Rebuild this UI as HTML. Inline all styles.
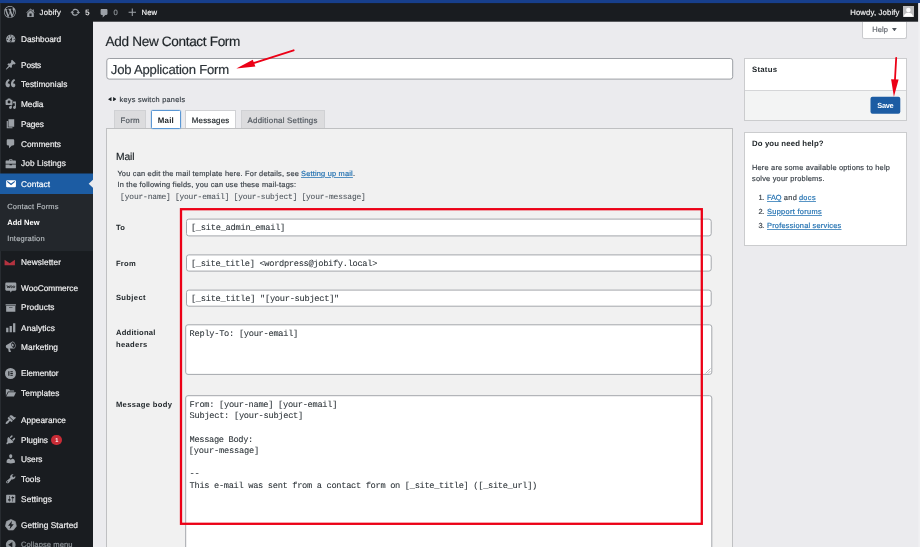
<!DOCTYPE html>
<html><head><meta charset="utf-8"><title>Add New Contact Form</title>
<style>
*{box-sizing:border-box;margin:0;padding:0}
html,body{width:920px;height:547px;overflow:hidden;background:#ebebee;font-family:"Liberation Sans",sans-serif;color:#3c434a}
.a{position:absolute}
.t{position:absolute;white-space:pre;text-rendering:geometricPrecision;line-height:12px;height:12px;-webkit-text-stroke:0.18px currentColor}
.inp{position:absolute;background:#fff;border:1px solid #a3a6ab;border-radius:2.5px}
.tab{position:absolute;top:110px;height:18px;border:1px solid #d0d1d4;border-bottom:none}
.box{position:absolute;background:#fff;border:1px solid #cbccce}
</style></head><body>
<div id="root" style="position:absolute;left:0;top:0;width:920px;height:547px;overflow:hidden">
<svg class="a" style="left:0;top:0" width="920" height="547" viewBox="0 0 920 547">
<rect x="0" y="0" width="918.3" height="21.7" fill="#191c20"/>
<rect x="0" y="0" width="920" height="3.1" fill="#173f8c"/>
<rect x="918.3" y="3.1" width="1.7" height="544" fill="#f0f0f2"/>
<rect x="0" y="10" width="93" height="540" fill="#191c20"/>
<rect x="0" y="3.1" width="0.9" height="545" fill="#2b2f34"/>
<rect x="0" y="173.5" width="93" height="20.5" fill="#1c5ca3"/>
<rect x="0" y="194" width="93" height="57.1" fill="#23272c"/>
<path d="M93.200 179.600L88.700 183.800L93.200 188z" fill="#ebebee"/>
</svg>
<div class="a" style="left:903.3px;top:6px;width:10.8px;height:10.8px;background:#bdbdbf;overflow:hidden"><svg class="a" style="left:0;top:0" width="10.8" height="10.8" viewBox="0 0 20 20"><circle cx="10" cy="7.5" r="4.2" fill="#fff"/><path d="M1.5 20c.5-5 3.5-7.5 8.5-7.5s8 2.500 8.500 7.500z" fill="#fff"/></svg></div>

<!-- Help tab -->
<div class="a" style="left:862px;top:22px;width:45px;height:17px;background:#fff;border:1px solid #c9cacd;border-top:none;border-radius:0 0 2.5px 2.5px"></div>
<svg class="a" style="left:892.4px;top:27.8px" width="4.8" height="3.4" viewBox="0 0 10 7"><path d="M0 0h10L5 7z" fill="#50575e"/></svg>

<!-- title input -->
<svg class="a" style="left:107.6px;top:96.9px" width="8.6" height="4.4" viewBox="0 0 8.600 4.400"><path d="M0 2.200L3.500 0v4.400zM8.600 2.200L5.100 0v4.400z" fill="#1d2327"/></svg>

<!-- tabs + panel -->
<div class="tab" style="left:114.3px;width:31.6px;background:#dcdcde"></div>
<div class="tab" style="left:185px;width:51px;background:#fff"></div>
<div class="tab" style="left:241.1px;width:83.5px;background:#dcdcde"></div>
<div class="a" style="left:106px;top:128px;width:627px;height:419px;background:#f1f1f1;border:1px solid #bfc0c2;border-bottom:none"></div>
<div class="tab" style="left:151.1px;width:29.6px;background:#fff;border:1px solid #5a97d4;border-radius:1.5px;box-shadow:0 0 0 0.5px rgba(90,151,212,.25);height:19px"></div>

<!-- fields -->
<svg class="a" style="left:0;top:0" width="920" height="547" viewBox="0 0 920 547">
<g fill="#fff" stroke="#a4a7ac" stroke-width="1">
<rect x="106.8" y="58.5" width="625.9" height="20.6" rx="2.4" stroke="#9c9fa4"/>
<rect x="186.5" y="219.1" width="524.7" height="16.8" rx="2.3"/>
<rect x="186.5" y="254.9" width="524.7" height="16.2" rx="2.3"/>
<rect x="186.5" y="290.1" width="524.7" height="16.100" rx="2.3"/>
<rect x="185.7" y="324.800" width="526.1" height="49.600" rx="2.3"/>
<rect x="185.7" y="395.700" width="526.1" height="170" rx="2.3"/>
</g></svg>
<svg class="a" style="left:705px;top:367.7px" width="6" height="6" viewBox="0 0 6 6"><path d="M5.5 0.500L0.500 5.500M5.500 3L3 5.500" stroke="#8c8f94" stroke-width="0.6" fill="none"/></svg>

<!-- right column -->
<div class="box" style="left:744px;top:58px;width:163px;height:63px"></div>
<div class="a" style="left:745px;top:90px;width:161px;height:30px;background:#f3f4f4;border-top:1px solid #d5d6d8"></div>
<svg class="a" style="left:0;top:0" width="920" height="547"><rect x="870.5" y="96.7" width="29.8" height="17.1" rx="2" fill="#1c5ca3"/></svg>
<div class="box" style="left:744px;top:132px;width:163px;height:114px"></div>

<svg style="position:absolute;left:3.90px;top:6.10px" width="11.80" height="11.80" viewBox="0 0 20 20"><path fill="#9ca1a7" fill-rule="evenodd" d="M20 10c0-5.51-4.49-10-10-10C4.48 0 0 4.49 0 10c0 5.52 4.48 10 10 10 5.51 0 10-4.48 10-10zM7.78 15.37L4.37 6.22c.55-.02 1.17-.08 1.17-.08.5-.06.44-1.13-.06-1.11 0 0-1.45.11-2.37.11-.18 0-.37 0-.58-.01C4.12 2.69 6.87 1.11 10 1.11c2.33 0 4.45.87 6.05 2.34-.68-.11-1.65.39-1.65 1.58 0 .74.45 1.36.9 2.1.35.61.55 1.36.55 2.46 0 1.49-1.4 5-1.4 5l-3.03-8.37c.54-.02.82-.17.82-.17.5-.05.44-1.25-.06-1.22 0 0-1.44.12-2.38.12-.87 0-2.33-.12-2.33-.12-.5-.03-.56 1.2-.06 1.22l.92.08 1.26 3.41zM17.41 10c.24-.64.74-1.87.43-4.25.7 1.29 1.05 2.71 1.05 4.25 0 3.29-1.73 6.24-4.4 7.78.97-2.59 1.94-5.2 2.92-7.78zM6.1 18.09C3.12 16.65 1.11 13.53 1.11 10c0-1.3.23-2.48.72-3.59C3.25 10.3 4.67 14.2 6.1 18.09zm4.03-6.63l2.58 6.98c-.86.29-1.76.45-2.71.45-.79 0-1.57-.11-2.29-.33.81-2.38 1.62-4.74 2.42-7.1z"/></svg>
<svg style="position:absolute;left:24.70px;top:6.80px" width="11.00" height="11.00" viewBox="0 0 20 20"><path fill="#9ca1a7" fill-rule="evenodd" d="M16 8.5l1.53 1.53-1.06 1.06L10 4.62l-6.47 6.47-1.06-1.06L10 2.5l4 4v-2h2v4zm-6-2.46l6 5.99V18H4v-5.97zM12 17v-5H8v5h4z"/></svg>
<svg style="position:absolute;left:70.10px;top:7.10px" width="10.60" height="10.60" viewBox="0 0 20 20"><path fill="#9ca1a7" fill-rule="evenodd" d="M10.2 3.28c3.53 0 6.43 2.61 6.92 6h2.08l-3.5 4-3.5-4h2.32c-.45-1.97-2.21-3.45-4.32-3.45-1.45 0-2.73.71-3.54 1.78L4.95 5.66C6.23 4.2 8.11 3.28 10.2 3.28zm-.4 13.44c-3.52 0-6.43-2.61-6.92-6H.8l3.5-4c1.17 1.33 2.33 2.67 3.5 4H5.48c.45 1.97 2.21 3.45 4.32 3.45 1.45 0 2.73-.71 3.54-1.78l1.71 1.95c-1.28 1.46-3.15 2.38-5.25 2.38z"/></svg>
<svg style="position:absolute;left:98.50px;top:7.50px" width="10.60" height="10.60" viewBox="0 0 20 20"><path fill="#9ca1a7" fill-rule="evenodd" d="M5 2h9c1.1 0 2 .9 2 2v7c0 1.1-.9 2-2 2h-2l-5 5v-5H5c-1.1 0-2-.9-2-2V4c0-1.1.9-2 2-2z"/></svg>
<svg style="position:absolute;left:127.20px;top:7.10px" width="10.60" height="10.60" viewBox="0 0 20 20"><path fill="#9ca1a7" fill-rule="evenodd" d="M17 9v2h-6v6H9v-6H3V9h6V3h2v6h6z"/></svg>
<svg style="position:absolute;left:4.75px;top:32.65px" width="11.50" height="11.50" viewBox="0 0 20 20"><path fill="#9ca1a7" fill-rule="evenodd" d="M3.76 16h12.48c1.1-1.37 1.76-3.11 1.76-5 0-4.42-3.58-8-8-8s-8 3.58-8 8c0 1.89.66 3.63 1.76 5zM10 4c.55 0 1 .45 1 1s-.45 1-1 1-1-.45-1-1 .45-1 1-1zM6 6c.55 0 1 .45 1 1s-.45 1-1 1-1-.45-1-1 .45-1 1-1zm8 0c.55 0 1 .45 1 1s-.45 1-1 1-1-.45-1-1 .45-1 1-1zm-5.37 5.55L12 7v6c0 1.1-.9 2-2 2s-2-.9-2-2c0-.57.24-1.08.63-1.45zM4 10c.55 0 1 .45 1 1s-.45 1-1 1-1-.45-1-1 .45-1 1-1zm12 0c.55 0 1 .45 1 1s-.45 1-1 1-1-.45-1-1 .45-1 1-1zm-5 3c0-.55-.45-1-1-1s-1 .45-1 1 .45 1 1 1 1-.45 1-1z"/></svg>
<svg style="position:absolute;left:4.75px;top:58.65px" width="11.50" height="11.50" viewBox="0 0 20 20"><path fill="#9ca1a7" fill-rule="evenodd" d="M10.44 3.02l1.82-1.82 6.36 6.35-1.83 1.82c-1.05-.68-2.48-.57-3.41.36l-.75.75c-.92.93-1.04 2.35-.35 3.41l-1.83 1.82-2.41-2.41-2.8 2.79c-.42.42-3.38 2.71-3.8 2.29s1.86-3.39 2.28-3.81l2.79-2.79L4.1 9.36l1.83-1.82c1.05.69 2.48.57 3.4-.36l.75-.75c.93-.92 1.05-2.35.36-3.41z"/></svg>
<svg style="position:absolute;left:4.75px;top:77.85px" width="11.50" height="11.50" viewBox="0 0 20 20"><path fill="#9ca1a7" fill-rule="evenodd" d="M8.54 12.74c0-.87-.24-1.61-.72-2.22-.73-.92-2.14-1.03-2.96-.85-.34-1.93 1.3-4.39 3.42-5.45L6.65 1.94C3.45 3.46.31 6.96.85 11.37 1.19 14.16 2.8 16 5.08 16c1 0 1.83-.29 2.48-.88.66-.59.98-1.38.98-2.38zm9.43 0c0-.87-.24-1.61-.72-2.22-.73-.92-2.14-1.03-2.96-.85-.34-1.93 1.3-4.39 3.42-5.45l-1.63-2.28c-3.2 1.52-6.34 5.02-5.8 9.43.34 2.79 1.95 4.63 4.23 4.63 1 0 1.83-.29 2.48-.88.66-.59.98-1.38.98-2.38z"/></svg>
<svg style="position:absolute;left:4.75px;top:98.05px" width="11.50" height="11.50" viewBox="0 0 20 20"><path fill="#9ca1a7" fill-rule="evenodd" d="M13 11V4c0-.55-.45-1-1-1h-1.67L9 1H5L3.67 3H2c-.55 0-1 .45-1 1v7c0 .55.45 1 1 1h10c.55 0 1-.45 1-1zM7 4.5c1.38 0 2.5 1.12 2.5 2.5S8.38 9.5 7 9.5 4.5 8.38 4.5 7 5.62 4.5 7 4.5zM14 6h5v10.5c0 1.38-1.12 2.5-2.5 2.5S14 17.88 14 16.5s1.12-2.5 2.5-2.5c.17 0 .34.02.5.05V9h-3V6zm-4 8.05V13h2v3.5c0 1.38-1.12 2.5-2.5 2.5S7 17.88 7 16.5 8.12 14 9.5 14c.17 0 .34.02.5.05z"/></svg>
<svg style="position:absolute;left:4.75px;top:118.05px" width="11.50" height="11.50" viewBox="0 0 20 20"><path fill="#9ca1a7" fill-rule="evenodd" d="M6 15V2h10v13H6zm-1 1h8v2H3V5h2v11z"/></svg>
<svg style="position:absolute;left:4.75px;top:138.15px" width="11.50" height="11.50" viewBox="0 0 20 20"><path fill="#9ca1a7" fill-rule="evenodd" d="M5 2h9c1.1 0 2 .9 2 2v7c0 1.1-.9 2-2 2h-2l-5 5v-5H5c-1.1 0-2-.9-2-2V4c0-1.1.9-2 2-2z"/></svg>
<svg style="position:absolute;left:4.75px;top:157.75px" width="11.50" height="11.50" viewBox="0 0 20 20"><path fill="#9ca1a7" fill-rule="evenodd" d="M7 4.5V3.2C7 2.5 7.5 2 8.2 2h3.6c.7 0 1.2.5 1.2 1.2v1.3h5c.6 0 1 .4 1 1V10H1V5.5c0-.6.4-1 1-1h5zm1.5 0h3v-1h-3v1zM1 11.2h7v1.6h4v-1.6h7V17c0 .6-.4 1-1 1H2c-.6 0-1-.4-1-1v-5.8z"/></svg>
<svg style="position:absolute;left:4.75px;top:177.75px" width="11.50" height="11.50" viewBox="0 0 20 20"><path fill="#ffffff" fill-rule="evenodd" d="M3.87 4h13.25C18.37 4 19 4.59 19 5.79v8.42c0 1.19-.63 1.79-1.88 1.79H3.87c-1.25 0-1.88-.6-1.88-1.79V5.79c0-1.2.63-1.79 1.88-1.79zm6.62 8.6l6.74-5.53c.24-.2.43-.66.13-1.07-.29-.41-.82-.42-1.17-.17l-5.7 3.86L4.8 5.83c-.35-.25-.88-.24-1.17.17-.3.41-.11.87.13 1.07z"/></svg>
<svg style="position:absolute;left:4.75px;top:301.65px" width="11.50" height="11.50" viewBox="0 0 20 20"><path fill="#9ca1a7" fill-rule="evenodd" d="M19 4v2H1V4h18zM2 7h16v10H2V7zm11 3V9H7v1h6z"/></svg>
<svg style="position:absolute;left:4.75px;top:321.65px" width="11.50" height="11.50" viewBox="0 0 20 20"><path fill="#9ca1a7" fill-rule="evenodd" d="M18 18V2h-4v16h4zm-6 0V7H8v11h4zm-6 0v-8H2v8h4z"/></svg>
<svg style="position:absolute;left:4.75px;top:341.45px" width="11.50" height="11.50" viewBox="0 0 20 20"><path fill="#9ca1a7" fill-rule="evenodd" d="M18.15 5.94c.46 1.62.38 3.22-.02 4.48-.42 1.28-1.26 2.18-2.3 2.48-.16.06-.26.06-.4.06-.06.02-.12.02-.18.02-.06.02-.14.02-.22.02h-6.8l2.22 5.5c.02.14-.06.26-.14.34-.08.1-.24.16-.34.16H6.95c-.1 0-.26-.06-.34-.16-.08-.08-.16-.2-.14-.34l-1-5.5H4.25l-.02-.02c-.5.06-1.08-.18-1.54-.62s-.88-1.08-1.06-1.88c-.24-.8-.2-1.56-.02-2.2.18-.62.58-1.08 1.06-1.3l.02-.02 9-5.4c.1-.06.18-.1.24-.16.06-.04.14-.08.24-.12.16-.08.28-.12.5-.18 1.04-.3 2.24.1 3.22.98s1.84 2.24 2.26 3.86zm-2.58 5.98h-.02c.4-.1.74-.34 1.04-.7.58-.7.86-1.76.86-3.04 0-.64-.1-1.3-.28-1.98-.34-1.36-1.02-2.5-1.78-3.24s-1.68-1.1-2.46-.88c-.82.22-1.4.96-1.7 2-.32 1.04-.28 2.36.06 3.72.38 1.36 1 2.5 1.8 3.24.78.74 1.62 1.1 2.48.88zm-2.54-7.08c.22-.04.42-.02.62.04.38.16.76.48 1.02 1s.42 1.2.42 1.78c0 .3-.04.56-.12.8-.18.48-.44.84-.86.94-.34.1-.8-.06-1.14-.4s-.64-.86-.78-1.5c-.18-.62-.12-1.24.02-1.72s.48-.84.82-.94z"/></svg>
<svg style="position:absolute;left:4.75px;top:387.05px" width="11.50" height="11.50" viewBox="0 0 20 20"><path fill="#9ca1a7" fill-rule="evenodd" d="M1.5 4h5.5l1.8 2H15c.6 0 1 .4 1 1v1H5.2L1.5 15.2V4zM6 9.2h13.2l-3.6 7.3H2.2L6 9.2z"/></svg>
<svg style="position:absolute;left:4.75px;top:414.05px" width="11.50" height="11.50" viewBox="0 0 20 20"><path fill="#9ca1a7" fill-rule="evenodd" d="M14.48 11.06L7.41 3.99l1.5-1.5c.5-.56 2.3-.47 3.51.32 1.21.8 1.43 1.28 2.91 2.1 1.18.64 2.45 1.26 4.45.85zm-.71.71L6.7 4.7 4.93 6.47c-.39.39-.39 1.02 0 1.41l1.06 1.06c.39.39.39 1.03 0 1.42-.6.6-1.43 1.11-2.21 1.69-.35.26-.7.53-1.01.84C1.43 14.23.4 16.08 1.4 17.07c.99 1 2.84-.03 4.18-1.36.31-.31.58-.66.85-1.02.57-.78 1.08-1.61 1.69-2.21.39-.39 1.02-.39 1.41 0l1.06 1.06c.39.39 1.02.39 1.41 0z"/></svg>
<svg style="position:absolute;left:4.75px;top:433.85px" width="11.50" height="11.50" viewBox="0 0 20 20"><path fill="#9ca1a7" fill-rule="evenodd" d="M13.11 4.36L9.87 7.6 8 5.73l3.24-3.24c.35-.34 1.05-.2 1.56.32.52.51.66 1.21.31 1.55zm-8 1.77l.91-1.12 9.01 9.01-1.19.84c-.71.71-2.63 1.16-3.82 1.16H6.14L4.9 17.26c-.59.59-1.54.59-2.12 0-.59-.58-.59-1.53 0-2.12l1.24-1.24v-3.88c0-1.13.4-3.19 1.09-3.89zm7.26 3.97l3.24-3.24c.34-.35 1.04-.21 1.55.31.52.51.66 1.21.31 1.55l-3.24 3.25z"/></svg>
<svg style="position:absolute;left:4.75px;top:453.25px" width="11.50" height="11.50" viewBox="0 0 20 20"><path fill="#9ca1a7" fill-rule="evenodd" d="M10 9.25c-2.27 0-2.73-3.44-2.73-3.44C7 4.02 7.82 2 9.97 2c2.16 0 2.98 2.02 2.71 3.81 0 0-.41 3.44-2.68 3.44zm0 2.57L12.72 10c2.39 0 4.52 2.33 4.52 4.53v2.49s-3.65 1.13-7.24 1.13c-3.65 0-7.24-1.13-7.24-1.13v-2.49c0-2.25 1.94-4.48 4.47-4.48z"/></svg>
<svg style="position:absolute;left:4.75px;top:473.45px" width="11.50" height="11.50" viewBox="0 0 20 20"><path fill="#9ca1a7" fill-rule="evenodd" d="M16.68 9.77c-1.34 1.34-3.3 1.67-4.95.99l-5.41 6.52c-.99.99-2.59.99-3.58 0s-.99-2.59 0-3.57l6.52-5.42c-.68-1.65-.35-3.61.99-4.95 1.28-1.28 3.12-1.62 4.72-1.06l-2.89 2.89 2.82 2.82 2.86-2.87c.53 1.58.18 3.39-1.08 4.65zM3.81 16.21c.4.39 1.04.39 1.43 0 .4-.4.4-1.04 0-1.43-.39-.4-1.03-.4-1.43 0-.39.39-.39 1.03 0 1.43z"/></svg>
<svg style="position:absolute;left:4.75px;top:493.25px" width="11.50" height="11.50" viewBox="0 0 20 20"><path fill="#9ca1a7" fill-rule="evenodd" d="M18 16V4c0-.55-.45-1-1-1H3c-.55 0-1 .45-1 1v12c0 .55.45 1 1 1h14c.55 0 1-.45 1-1zM8 11h1c.55 0 1 .45 1 1s-.45 1-1 1H8v1.5c0 .28-.22.5-.5.5s-.5-.22-.5-.5V13H6c-.55 0-1-.45-1-1s.45-1 1-1h1V5.5c0-.28.22-.5.5-.5s.5.22.5.5V11zm5-2h-1c-.55 0-1-.45-1-1s.45-1 1-1h1V5.5c0-.28.22-.5.5-.5s.5.22.5.5V7h1c.55 0 1 .45 1 1s-.45 1-1 1h-1v5.5c0 .28-.22.5-.5.5s-.5-.22-.5-.5V9z"/></svg>
<svg style="position:absolute;left:4.35px;top:255.65px" width="11.50" height="11.50" viewBox="0 0 20 20"><path fill="#b3323f" fill-rule="evenodd" d="M1 6.5L10 12.5L19 6.5V16H1z"/></svg>
<svg style="position:absolute;left:4.75px;top:539.25px" width="11.50" height="11.50" viewBox="0 0 20 20"><path fill="#8f959a" fill-rule="evenodd" d="M10 1.5a8.5 8.5 0 100 17 8.5 8.5 0 000-17zM12.8 5.2v9.6L5.6 10z"/></svg>
<!-- woo icon -->
<svg class="a" style="left:5px;top:281.8px" width="11.6" height="11.6" viewBox="0 0 20 20"><path d="M2.500 1h15a2 2 0 012 2v10a2 2 0 01-2 2H12l-2.200 3-1.300-3H2.500a2 2 0 01-2-2V3a2 2 0 012-2z" fill="#9ca1a7"/><path d="M3.600 6.200l1.300 4 1.300-3.200 1.300 3.200 1.300-4" fill="none" stroke="#191c20" stroke-width="1.300" stroke-linejoin="round" stroke-linecap="round"/><circle cx="11.300" cy="8.300" r="1.500" fill="none" stroke="#191c20" stroke-width="1.300"/><circle cx="15.300" cy="8.300" r="1.500" fill="none" stroke="#191c20" stroke-width="1.300"/></svg>
<!-- elementor icon -->
<svg class="a" style="left:5px;top:367.7px" width="11" height="11" viewBox="0 0 20 20"><circle cx="10" cy="10" r="10" fill="#9ca1a7"/><path d="M6 5.800h2v8.400H6zM9.800 5.800h4.400v1.800H9.800zM9.800 9.100h4.400v1.800H9.800zM9.800 12.400h4.400v1.800H9.800z" fill="#191c20"/></svg>
<!-- getting started icon -->
<svg class="a" style="left:4.9px;top:519.2px" width="11.8" height="12" viewBox="0 0 20 20"><path d="M10 .5l7.500 3.600 1.800 7.900-5.100 6.500H5.800L.700 12 2.500 4.100z" fill="#9ca1a7" stroke="#9ca1a7" stroke-width="1" stroke-linejoin="round"/><path d="M11.800 2.600L5.200 11.200h3.900l-1.200 6.200L14.800 8.800h-3.900z" fill="#191c20"/></svg>
<!-- plugin badge -->
<div class="a" style="left:51.3px;top:435px;width:10.4px;height:10.4px;border-radius:50%;background:#c92c36"></div>

<div class="a" id="tx" style="left:0;top:0;width:920px;height:547px;will-change:transform">
<div class="t" style="left:39.60px;top:7.00px;font-size:7.7px;color:#f0f0f1;letter-spacing:0.219px;">Jobify</div>
<div class="t" style="left:85.20px;top:7.00px;font-size:7.7px;color:#f0f0f1;letter-spacing:-0.281px;">5</div>
<div class="t" style="left:113.40px;top:7.00px;font-size:7.7px;color:#8c9196;letter-spacing:-0.181px;">0</div>
<div class="t" style="left:141.60px;top:7.00px;font-size:7.7px;color:#f0f0f1;letter-spacing:0.004px;">New</div>
<div class="t" style="left:850.20px;top:7.00px;font-size:7.7px;color:#f0f0f1;letter-spacing:0.161px;">Howdy, Jobify</div>
<div class="t" style="left:21.00px;top:33.00px;font-size:8.3px;color:#f0f0f1;letter-spacing:-0.070px;">Dashboard</div>
<div class="t" style="left:21.00px;top:59.00px;font-size:8.3px;color:#f0f0f1;letter-spacing:-0.126px;">Posts</div>
<div class="t" style="left:21.00px;top:78.00px;font-size:8.3px;color:#f0f0f1;letter-spacing:0.065px;">Testimonials</div>
<div class="t" style="left:21.00px;top:98.00px;font-size:8.3px;color:#f0f0f1;letter-spacing:-0.047px;">Media</div>
<div class="t" style="left:21.00px;top:118.00px;font-size:8.3px;color:#f0f0f1;letter-spacing:-0.163px;">Pages</div>
<div class="t" style="left:21.00px;top:138.00px;font-size:8.3px;color:#f0f0f1;letter-spacing:-0.017px;">Comments</div>
<div class="t" style="left:21.00px;top:157.00px;font-size:8.3px;color:#f0f0f1;letter-spacing:0.102px;">Job Listings</div>
<div class="t" style="left:21.00px;top:178.00px;font-size:8.3px;color:#ffffff;letter-spacing:0.062px;">Contact</div>
<div class="t" style="left:21.00px;top:256.00px;font-size:8.3px;color:#f0f0f1;letter-spacing:0.084px;">Newsletter</div>
<div class="t" style="left:21.00px;top:282.00px;font-size:8.3px;color:#f0f0f1;letter-spacing:-0.046px;">WooCommerce</div>
<div class="t" style="left:21.00px;top:301.00px;font-size:8.3px;color:#f0f0f1;letter-spacing:0.100px;">Products</div>
<div class="t" style="left:21.00px;top:322.00px;font-size:8.3px;color:#f0f0f1;letter-spacing:0.094px;">Analytics</div>
<div class="t" style="left:21.00px;top:341.00px;font-size:8.3px;color:#f0f0f1;letter-spacing:0.066px;">Marketing</div>
<div class="t" style="left:21.00px;top:367.00px;font-size:8.3px;color:#f0f0f1;letter-spacing:-0.039px;">Elementor</div>
<div class="t" style="left:21.00px;top:387.00px;font-size:8.3px;color:#f0f0f1;letter-spacing:0.079px;">Templates</div>
<div class="t" style="left:21.00px;top:414.00px;font-size:8.3px;color:#f0f0f1;letter-spacing:0.026px;">Appearance</div>
<div class="t" style="left:21.00px;top:434.00px;font-size:8.3px;color:#f0f0f1;letter-spacing:-0.034px;">Plugins</div>
<div class="t" style="left:21.00px;top:453.00px;font-size:8.3px;color:#f0f0f1;letter-spacing:-0.038px;">Users</div>
<div class="t" style="left:21.00px;top:473.00px;font-size:8.3px;color:#f0f0f1;letter-spacing:0.028px;">Tools</div>
<div class="t" style="left:21.00px;top:493.00px;font-size:8.3px;color:#f0f0f1;letter-spacing:0.135px;">Settings</div>
<div class="t" style="left:21.00px;top:519.00px;font-size:8.3px;color:#f0f0f1;letter-spacing:0.082px;">Getting Started</div>
<div class="t" style="left:21.00px;top:539.00px;font-size:7.6px;color:#8f959a;letter-spacing:0.068px;">Collapse menu</div>
<div class="t" style="left:7.20px;top:201.00px;font-size:7.5px;color:#b3b8bc;letter-spacing:0.177px;">Contact Forms</div>
<div class="t" style="left:7.20px;top:217.00px;font-size:7.5px;color:#ffffff;letter-spacing:0.047px;font-weight:700;-webkit-text-stroke:0;">Add New</div>
<div class="t" style="left:7.20px;top:233.00px;font-size:7.5px;color:#b3b8bc;letter-spacing:0.204px;">Integration</div>
<div class="t" style="left:55.20px;top:435.00px;font-size:5.6px;color:#ffffff;letter-spacing:-0.525px;font-weight:700;-webkit-text-stroke:0;">1</div>
<div class="t" style="left:105.60px;top:36.00px;font-size:13.6px;color:#1d2327;letter-spacing:-0.343px;">Add New Contact Form</div>
<div class="t" style="left:872.20px;top:24.00px;font-size:7.5px;color:#646970;letter-spacing:0.104px;">Help</div>
<div class="t" style="left:110.80px;top:64.00px;font-size:13.1px;color:#2c3338;letter-spacing:-0.209px;">Job Application Form</div>
<div class="t" style="left:119.60px;top:94.00px;font-size:7.3px;color:#3c434a;letter-spacing:0.272px;">keys switch panels</div>
<div class="t" style="left:120.60px;top:115.00px;font-size:7.9px;color:#50575e;letter-spacing:0.165px;">Form</div>
<div class="t" style="left:157.70px;top:115.00px;font-size:7.9px;color:#1d2327;letter-spacing:0.240px;font-weight:700;-webkit-text-stroke:0;">Mail</div>
<div class="t" style="left:191.80px;top:115.00px;font-size:7.9px;color:#1d2327;letter-spacing:0.204px;">Messages</div>
<div class="t" style="left:247.50px;top:115.00px;font-size:7.9px;color:#50575e;letter-spacing:0.250px;">Additional Settings</div>
<div class="t" style="left:115.90px;top:152.00px;font-size:10.3px;color:#1d2327;letter-spacing:-0.054px;">Mail</div>
<div class="t" style="left:117.40px;top:168.00px;font-size:7.4px;color:#3c434a;letter-spacing:0.217px;">You can edit the mail template here. For details, see</div>
<div class="t" style="left:301.00px;top:168.00px;font-size:7.4px;color:#2271b1;letter-spacing:0.201px;text-decoration:underline;text-decoration-thickness:0.6px;text-underline-offset:1px;text-decoration-color:rgba(34,113,177,.75);">Setting up mail</div>
<div class="t" style="left:352.90px;top:168.00px;font-size:7.4px;color:#3c434a;letter-spacing:-0.162px;">.</div>
<div class="t" style="left:117.40px;top:179.00px;font-size:7.4px;color:#3c434a;letter-spacing:0.227px;">In the following fields, you can use these mail-tags:</div>
<div class="t" style="left:120.10px;top:192.00px;font-size:7.9px;color:#50575e;letter-spacing:-0.133px;font-family:'Liberation Mono',monospace;-webkit-text-stroke:0.08px currentColor;">[your-name]</div>
<div class="t" style="left:174.90px;top:192.00px;font-size:7.9px;color:#50575e;letter-spacing:-0.194px;font-family:'Liberation Mono',monospace;-webkit-text-stroke:0.08px currentColor;">[your-email]</div>
<div class="t" style="left:233.60px;top:192.00px;font-size:7.9px;color:#50575e;letter-spacing:-0.192px;font-family:'Liberation Mono',monospace;-webkit-text-stroke:0.08px currentColor;">[your-subject]</div>
<div class="t" style="left:301.40px;top:192.00px;font-size:7.9px;color:#50575e;letter-spacing:-0.141px;font-family:'Liberation Mono',monospace;-webkit-text-stroke:0.08px currentColor;">[your-message]</div>
<div class="t" style="left:115.90px;top:222.00px;font-size:7.6px;color:#1d2327;letter-spacing:0.188px;font-weight:700;-webkit-text-stroke:0;">To</div>
<div class="t" style="left:115.90px;top:258.00px;font-size:7.6px;color:#1d2327;letter-spacing:0.319px;font-weight:700;-webkit-text-stroke:0;">From</div>
<div class="t" style="left:115.90px;top:292.00px;font-size:7.6px;color:#1d2327;letter-spacing:0.379px;font-weight:700;-webkit-text-stroke:0;">Subject</div>
<div class="t" style="left:115.90px;top:327.00px;font-size:7.6px;color:#1d2327;letter-spacing:0.271px;font-weight:700;-webkit-text-stroke:0;">Additional</div>
<div class="t" style="left:115.90px;top:339.00px;font-size:7.6px;color:#1d2327;letter-spacing:0.363px;font-weight:700;-webkit-text-stroke:0;">headers</div>
<div class="t" style="left:115.90px;top:399.00px;font-size:7.6px;color:#1d2327;letter-spacing:0.344px;font-weight:700;-webkit-text-stroke:0;">Message body</div>
<div class="t" style="left:190.90px;top:222.00px;font-size:8.7px;color:#2c3338;letter-spacing:-0.257px;font-family:'Liberation Mono',monospace;-webkit-text-stroke:0.08px currentColor;">[_site_admin_email]</div>
<div class="t" style="left:190.90px;top:258.00px;font-size:8.7px;color:#2c3338;letter-spacing:-0.315px;font-family:'Liberation Mono',monospace;-webkit-text-stroke:0.08px currentColor;">[_site_title] &lt;wordpress@jobify.local&gt;</div>
<div class="t" style="left:190.90px;top:293.00px;font-size:8.7px;color:#2c3338;letter-spacing:-0.275px;font-family:'Liberation Mono',monospace;-webkit-text-stroke:0.08px currentColor;">[_site_title] &quot;[your-subject]&quot;</div>
<div class="t" style="left:189.60px;top:328.00px;font-size:8.7px;color:#2c3338;letter-spacing:-0.284px;font-family:'Liberation Mono',monospace;-webkit-text-stroke:0.08px currentColor;">Reply-To: [your-email]</div>
<div class="t" style="left:189.60px;top:399.00px;font-size:8.7px;color:#2c3338;letter-spacing:-0.297px;font-family:'Liberation Mono',monospace;-webkit-text-stroke:0.08px currentColor;">From: [your-name] [your-email]</div>
<div class="t" style="left:189.60px;top:410.00px;font-size:8.7px;color:#2c3338;letter-spacing:-0.284px;font-family:'Liberation Mono',monospace;-webkit-text-stroke:0.08px currentColor;">Subject: [your-subject]</div>
<div class="t" style="left:189.60px;top:434.00px;font-size:8.7px;color:#2c3338;letter-spacing:-0.337px;font-family:'Liberation Mono',monospace;-webkit-text-stroke:0.08px currentColor;">Message Body:</div>
<div class="t" style="left:188.80px;top:445.00px;font-size:8.7px;color:#2c3338;letter-spacing:-0.189px;font-family:'Liberation Mono',monospace;-webkit-text-stroke:0.08px currentColor;">[your-message]</div>
<div class="t" style="left:189.60px;top:468.00px;font-size:8.7px;color:#2c3338;letter-spacing:-0.325px;font-family:'Liberation Mono',monospace;-webkit-text-stroke:0.08px currentColor;">--</div>
<div class="t" style="left:189.60px;top:480.00px;font-size:8.7px;color:#2c3338;letter-spacing:-0.321px;font-family:'Liberation Mono',monospace;-webkit-text-stroke:0.08px currentColor;">This e-mail was sent from a contact form on [_site_title] ([_site_url])</div>
<div class="t" style="left:752.00px;top:64.00px;font-size:7.8px;color:#1d2327;letter-spacing:0.247px;font-weight:700;-webkit-text-stroke:0;">Status</div>
<div class="t" style="left:877.30px;top:100.00px;font-size:7.4px;color:#ffffff;letter-spacing:-0.304px;font-weight:700;-webkit-text-stroke:0;">Save</div>
<div class="t" style="left:752.00px;top:138.00px;font-size:7.8px;color:#1d2327;letter-spacing:0.112px;font-weight:700;-webkit-text-stroke:0;">Do you need help?</div>
<div class="t" style="left:752.00px;top:162.00px;font-size:7.4px;color:#3c434a;letter-spacing:0.201px;">Here are some available options to help</div>
<div class="t" style="left:752.00px;top:173.00px;font-size:7.4px;color:#3c434a;letter-spacing:0.226px;">solve your problems.</div>
<div class="t" style="left:758.50px;top:192.00px;font-size:7.4px;color:#3c434a;letter-spacing:-0.315px;">1.</div>
<div class="t" style="left:767.00px;top:192.00px;font-size:7.4px;color:#2271b1;letter-spacing:-0.119px;text-decoration:underline;text-decoration-thickness:0.6px;text-underline-offset:1px;text-decoration-color:rgba(34,113,177,.75);">FAQ</div>
<div class="t" style="left:783.80px;top:192.00px;font-size:7.4px;color:#3c434a;letter-spacing:0.343px;">and</div>
<div class="t" style="left:798.90px;top:192.00px;font-size:7.4px;color:#2271b1;letter-spacing:0.364px;text-decoration:underline;text-decoration-thickness:0.6px;text-underline-offset:1px;text-decoration-color:rgba(34,113,177,.75);">docs</div>
<div class="t" style="left:758.50px;top:206.00px;font-size:7.4px;color:#3c434a;letter-spacing:-0.315px;">2.</div>
<div class="t" style="left:767.00px;top:206.00px;font-size:7.4px;color:#2271b1;letter-spacing:0.316px;text-decoration:underline;text-decoration-thickness:0.6px;text-underline-offset:1px;text-decoration-color:rgba(34,113,177,.75);">Support forums</div>
<div class="t" style="left:758.50px;top:220.00px;font-size:7.4px;color:#3c434a;letter-spacing:-0.315px;">3.</div>
<div class="t" style="left:767.00px;top:220.00px;font-size:7.4px;color:#2271b1;letter-spacing:0.222px;text-decoration:underline;text-decoration-thickness:0.6px;text-underline-offset:1px;text-decoration-color:rgba(34,113,177,.75);">Professional services</div>
</div>

<!-- annotations -->
<svg class="a" style="left:0;top:0" width="920" height="547" viewBox="0 0 920 547">
<rect x="181" y="209.2" width="520.8" height="314.6" fill="none" stroke="#ec0016" stroke-width="2.3"/>
<line x1="293.6" y1="50.3" x2="252" y2="63.6" stroke="#ec0016" stroke-width="1.9" stroke-linecap="round"/>
<polygon points="236.300,68.500 252.800,59.800 255.400,66.500" fill="#ec0016"/>
<line x1="896.2" y1="57.8" x2="894.9" y2="81" stroke="#ec0016" stroke-width="1.8" stroke-linecap="round"/>
<polygon points="893.900,96.800 891.100,79.200 898.600,79.400" fill="#ec0016"/>
</svg>
</div>
</body></html>
